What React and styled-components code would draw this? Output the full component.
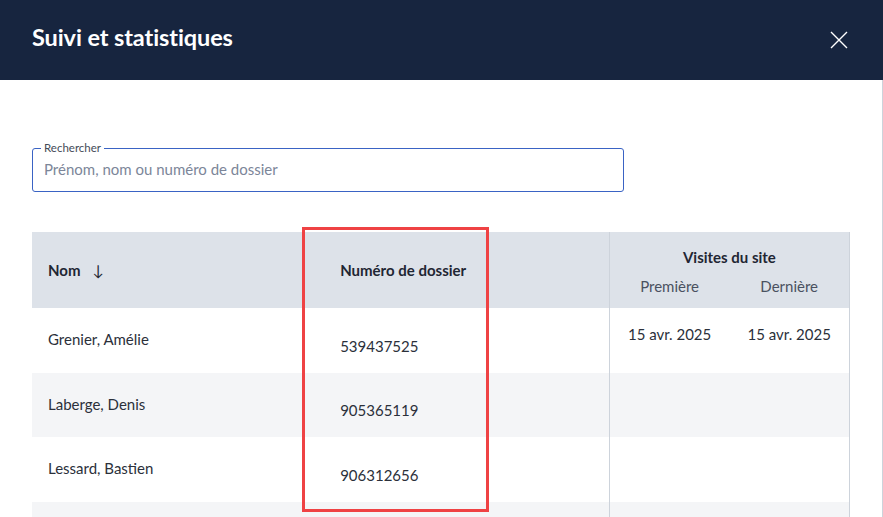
import React from "react";
import styled, { createGlobalStyle } from "styled-components";

const Global = createGlobalStyle`
  html, body { margin: 0; padding: 0; background: #ffffff; }
  body { font-family: Lato, "Noto Sans", sans-serif; color: #1f2633; overflow: hidden; }
  * { box-sizing: border-box; }
`;

const Modal = styled.div`
  width: 883px;
  height: 517px;
  display: flex;
  flex-direction: column;
  overflow: hidden;
`;

const Header = styled.header`
  height: 80px;
  background: #17253f;
  display: flex;
  align-items: center;
  justify-content: space-between;
  padding: 0 32px 0 32px;
  flex-shrink: 0;
`;

const Title = styled.h1`
  margin: 0 0 7px 0;
  font-size: 23.5px;
  font-weight: 700;
  color: #ffffff;
  letter-spacing: -0.1px;
`;

const CloseButton = styled.button`
  background: none;
  border: 0;
  padding: 0;
  width: 20px;
  height: 20px;
  display: flex;
  align-items: center;
  justify-content: center;
  cursor: pointer;
  margin-right: 2px;
`;

const Body = styled.main`
  flex: 1;
  border-right: 1px solid #cdd3db;
  padding: 68px 33px 0 32px;
  display: flex;
  flex-direction: column;
`;

const Field = styled.div`
  position: relative;
  width: 592px;
  height: 44px;
  border: 1px solid #3a63c4;
  border-radius: 3px;
  padding: 0 11px;
  display: flex;
  align-items: center;
`;

const FloatingLabel = styled.label`
  position: absolute;
  top: -8px;
  left: 8px;
  font-size: 11.5px;
  color: #444b57;
  padding: 0 3px;
  background: #ffffff;
  line-height: 14px;
`;

const Input = styled.input`
  border: 0;
  outline: none;
  width: 100%;
  font-family: inherit;
  font-size: 15px;
  color: #1f2633;
  padding: 0;
  margin-top: -3px;
  background: transparent;
  &::placeholder { color: #7c8699; }
`;

const TableWrap = styled.div`
  position: relative;
  margin-top: 40px;
  width: 818px;
`;

const Table = styled.table`
  width: 818px;
  border-collapse: collapse;
  table-layout: fixed;
  border-right: 1px solid #cdd3db;
`;

const Th = styled.th`
  background: #dde2e9;
  text-align: left;
  padding: 0 16px;
  font-size: 15px;
  font-weight: 700;
  color: #1f2633;
  vertical-align: middle;
`;

const GroupTh = styled.th`
  background: #dde2e9;
  height: 44px;
  padding: 16px 0 0 0;
  vertical-align: top;
  text-align: center;
  font-size: 15px;
  font-weight: 700;
  color: #1f2633;
  border-left: 1px solid #cdd3db;
`;

const SubTh = styled.th`
  background: #dde2e9;
  text-align: center;
  font-size: 15px;
  font-weight: 400;
  color: #4a5160;
  height: 32px;
  padding: 1px 0 0 0;
  vertical-align: top;
  border-left: ${(p) => (p.$divider ? "1px solid #cdd3db" : "0")};
`;

const SortArrow = styled.span`
  display: inline-block;
  margin-left: 12px;
  font-weight: 400;
  font-size: 15px;
`;

const Tr = styled.tr`
  background: ${(p) => (p.$alt ? "#f4f5f7" : "#ffffff")};
  height: 64.5px;
`;

const Td = styled.td`
  padding: ${(p) => p.$pad || "0 16px 2px 16px"};
  font-size: 15px;
  color: #2b303a;
  vertical-align: ${(p) => p.$valign || "middle"};
  text-align: ${(p) => p.$align || "left"};
  border-left: ${(p) => (p.$divider ? "1px solid #cdd3db" : "0")};
  white-space: nowrap;
`;

const Highlight = styled.div`
  position: absolute;
  left: 270px;
  top: -5px;
  width: 187px;
  height: 285px;
  border: 3px solid #ef4244;
  pointer-events: none;
`;

const rows = [
  { name: "Grenier, Amélie", num: "539437525", first: "15 avr. 2025", last: "15 avr. 2025" },
  { name: "Laberge, Denis", num: "905365119", first: "", last: "" },
  { name: "Lessard, Bastien", num: "906312656", first: "", last: "" },
  { name: "", num: "", first: "", last: "" },
];

export default function App() {
  return (
    <>
      <Global />
      <Modal>
        <Header>
          <Title>Suivi et statistiques</Title>
          <CloseButton aria-label="Fermer">
            <svg width="18" height="18" viewBox="0 0 18 18">
              <path d="M1 1 L17 17 M17 1 L1 17" stroke="#ffffff" strokeWidth="1.4" fill="none" />
            </svg>
          </CloseButton>
        </Header>
        <Body>
          <Field>
            <FloatingLabel htmlFor="search">Rechercher</FloatingLabel>
            <Input id="search" placeholder="Prénom, nom ou numéro de dossier" />
          </Field>
          <TableWrap>
            <Table>
              <colgroup>
                <col style={{ width: "292px" }} />
                <col style={{ width: "285px" }} />
                <col style={{ width: "120px" }} />
                <col style={{ width: "120px" }} />
              </colgroup>
              <thead>
                <tr>
                  <Th rowSpan={2}>
                    Nom<SortArrow>↓</SortArrow>
                  </Th>
                  <Th rowSpan={2}>Numéro de dossier</Th>
                  <GroupTh colSpan={2}>Visites du site</GroupTh>
                </tr>
                <tr>
                  <SubTh $divider>Première</SubTh>
                  <SubTh>Dernière</SubTh>
                </tr>
              </thead>
              <tbody>
                {rows.map((r, i) => (
                  <Tr key={i} $alt={i % 2 === 1}>
                    <Td>{r.name}</Td>
                    <Td $pad="11px 16px 0 16px">{r.num}</Td>
                    <Td $divider $align="center" $valign="top" $pad="17px 0 0 0">{r.first}</Td>
                    <Td $align="center" $valign="top" $pad="17px 0 0 0">{r.last}</Td>
                  </Tr>
                ))}
              </tbody>
            </Table>
            <Highlight />
          </TableWrap>
        </Body>
      </Modal>
    </>
  );
}
